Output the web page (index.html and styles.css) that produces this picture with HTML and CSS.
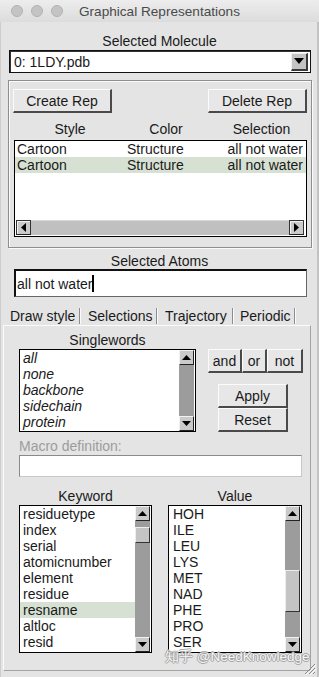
FILE: index.html
```html
<!DOCTYPE html>
<html>
<head>
<meta charset="utf-8">
<link rel="stylesheet" href="styles.css">
</head>
<body>
<div class="win">
  <div class="titlebar">
    <div class="lights"><span class="light"></span><span class="light"></span><span class="light"></span></div>
    <div class="title">Graphical Representations</div>
    <div></div>
  </div>

  <div class="lbl lbl-mol">Selected Molecule</div>
  <div class="menu">
    <span class="menu-text">0: 1LDY.pdb</span>
    <span class="menubtn"><svg width="10" height="6" viewBox="0 0 10 6"><path d="M0 0H10L5 6Z" fill="#000"/></svg></span>
  </div>

  <div class="frame">
    <div class="btnrow">
      <div class="btn rep-btn">Create Rep</div>
      <div class="btn rep-btn">Delete Rep</div>
    </div>
    <div class="hdr">
      <span class="h1">Style</span><span class="h2">Color</span><span class="h3">Selection</span>
    </div>
    <div class="replist">
      <div class="rows">
        <div class="rrow"><span class="c1">Cartoon</span><span class="c2">Structure</span><span class="c3">all not water</span></div>
        <div class="rrow sel"><span class="c1">Cartoon</span><span class="c2">Structure</span><span class="c3">all not water</span></div>
      </div>
      <div class="hscroll">
        <div class="arr"><svg width="5" height="9" viewBox="0 0 5 9"><path d="M5 0V9L0 4.5Z" fill="#000"/></svg></div>
        <div class="htrough"></div>
        <div class="arr"><svg width="5" height="9" viewBox="0 0 5 9"><path d="M0 0V9L5 4.5Z" fill="#000"/></svg></div>
      </div>
    </div>
  </div>

  <div class="lbl lbl-atoms">Selected Atoms</div>
  <div class="entry">all not water<span class="caret"></span></div>

  <div class="tabs">
    <div class="tab t1">Draw style</div>
    <div class="tab t2">Selections</div>
    <div class="tab t3">Trajectory</div>
    <div class="tab t4">Periodic</div>
  </div>

  <div class="pane">
    <div class="sec1">
      <div class="swcol">
        <div class="lbl">Singlewords</div>
        <div class="lb sw">
          <div class="items it">
            <div class="item">all</div>
            <div class="item">none</div>
            <div class="item">backbone</div>
            <div class="item">sidechain</div>
            <div class="item">protein</div>
          </div>
          <div class="vscroll">
            <div class="varr"><svg width="9" height="5" viewBox="0 0 9 5"><path d="M0 5H9L4.5 0Z" fill="#000"/></svg></div>
            <div class="vtrough"></div>
            <div class="varr"><svg width="9" height="5" viewBox="0 0 9 5"><path d="M0 0H9L4.5 5Z" fill="#000"/></svg></div>
          </div>
        </div>
      </div>
      <div class="opcol">
        <div class="ops">
          <div class="btn op op-and">and</div>
          <div class="btn op op-or">or</div>
          <div class="btn op op-not">not</div>
        </div>
        <div class="btn ar">Apply</div>
        <div class="btn ar">Reset</div>
      </div>
    </div>

    <div class="macro-lbl">Macro definition:</div>
    <div class="macro-entry"></div>

    <div class="sec2">
      <div class="kvcol kcol">
        <div class="lbl">Keyword</div>
        <div class="lb kv">
          <div class="items">
            <div class="item">residuetype</div>
            <div class="item">index</div>
            <div class="item">serial</div>
            <div class="item">atomicnumber</div>
            <div class="item">element</div>
            <div class="item">residue</div>
            <div class="item sel">resname</div>
            <div class="item">altloc</div>
            <div class="item">resid</div>
          </div>
          <div class="vscroll">
            <div class="varr"><svg width="9" height="5" viewBox="0 0 9 5"><path d="M0 5H9L4.5 0Z" fill="#000"/></svg></div>
            <div class="vtrough"><div class="thumb" style="margin-top:6px;height:16px"></div></div>
            <div class="varr"><svg width="9" height="5" viewBox="0 0 9 5"><path d="M0 0H9L4.5 5Z" fill="#000"/></svg></div>
          </div>
        </div>
      </div>
      <div class="kvcol vcol">
        <div class="lbl">Value</div>
        <div class="lb kv">
          <div class="items">
            <div class="item">HOH</div>
            <div class="item">ILE</div>
            <div class="item">LEU</div>
            <div class="item">LYS</div>
            <div class="item">MET</div>
            <div class="item">NAD</div>
            <div class="item">PHE</div>
            <div class="item">PRO</div>
            <div class="item">SER</div>
          </div>
          <div class="vscroll">
            <div class="varr"><svg width="9" height="5" viewBox="0 0 9 5"><path d="M0 5H9L4.5 0Z" fill="#000"/></svg></div>
            <div class="vtrough"><div class="thumb" style="margin-top:49px;height:42px"></div></div>
            <div class="varr"><svg width="9" height="5" viewBox="0 0 9 5"><path d="M0 0H9L4.5 5Z" fill="#000"/></svg></div>
          </div>
        </div>
      </div>
    </div>
  </div>

  <div class="watermark">知乎 @NeedKnowledge</div>
  <svg class="grip" width="12" height="12" viewBox="0 0 12 12">
    <path d="M11 1L1 11M11 5L5 11M11 9L9 11" stroke="#8a8a8a" stroke-width="1"/>
    <path d="M12 2L2 12M12 6L6 12" stroke="#fafafa" stroke-width="1"/>
  </svg>
</div>
</body>
</html>
```
FILE: styles.css
```css
* { box-sizing: border-box; margin: 0; padding: 0; }
html, body { width: 319px; height: 677px; overflow: hidden; }
body {
  background: #e4e4e4;
  font-family: "Liberation Sans", Arial, sans-serif;
  font-size: 14px;
  color: #1a1a1a;
}
.win {
  position: relative;
  width: 319px;
  height: 677px;
  display: flex;
  flex-direction: column;
  box-shadow: inset 1px 0 0 #cdcdcd, inset -2px 0 0 #c2c2c2;
}

/* title bar */
.titlebar {
  height: 22px;
  display: grid;
  grid-template-columns: 1fr auto 1fr;
  align-items: center;
  background: linear-gradient(#ededed, #dcdcdc);
}
.lights { display: flex; gap: 8px; padding-left: 11px; }
.light {
  width: 12px; height: 12px; border-radius: 50%;
  background: #c4c4c4;
  border: 1px solid #b2b2b2;
}
.title { font-size: 13.6px; color: #4a4a4a; }

.lbl { text-align: center; height: 16px; line-height: 16px; }
.lbl-mol { margin-top: 11px; }

/* menu */
.menu {
  margin: 1px 8px 0 9px;
  height: 23px;
  background: #fff;
  border: 1px solid #111;
  box-shadow: inset 1px 1px 0 #333;
  display: flex;
  align-items: center;
  justify-content: space-between;
}
.menu-text { padding-left: 4px; }
.menubtn {
  width: 17px; height: 18px;
  margin-right: 2px;
  background: #c3c3c3;
  border-style: solid;
  border-width: 1px 2px 2px 1px;
  border-color: #efefef #3a3a3a #3a3a3a #efefef;
  display: flex; align-items: center; justify-content: center;
}

/* frame */
.frame {
  margin: 7px 7px 0 8px;
  height: 168px;
  border: 1px solid #8e8e8e;
  box-shadow: inset 1px 1px 0 #fafafa, 1px 1px 0 #fafafa;
  padding: 8px 4px 10px 4px;
  display: flex;
  flex-direction: column;
}
.btnrow { display: flex; justify-content: space-between; }
.btn {
  height: 24px;
  background: #e7e7e7;
  border-style: solid;
  border-width: 1px 2px 2px 1px;
  border-color: #fbfbfb #4a4a4a #4a4a4a #fbfbfb;
  display: flex; align-items: center; justify-content: center;
  line-height: 16px;
}
.rep-btn { width: 99px; }
.hdr { margin: 8px 0 0 1px; height: 16px; line-height: 16px; display: flex; }
.h1 { width: 112px; text-align: center; }
.h2 { width: 80px; text-align: center; }
.h3 { flex: 1; text-align: center; padding-left: 10px; }

.replist {
  margin: 3px 0 0 1px;
  height: 97px;
  background: #fff;
  border: 1px solid #000;
  display: flex;
  flex-direction: column;
}
.rows { flex: 1; }
.rrow { display: flex; height: 16px; line-height: 16px; }
.rrow.sel { background: #d7e1d3; }
.c1 { width: 112px; padding-left: 2px; }
.c2 { flex: 1; }
.c3 { padding-right: 3px; text-align: right; }
.hscroll { display: flex; height: 15px; margin: 0 2px 1px 1px; }
.arr {
  width: 15px; height: 15px;
  background: #cacaca;
  border-style: solid; border-width: 1px;
  border-color: #333 #333 #222 #333;
  box-shadow: inset 1px 1px 0 #f2f2f2;
  display: flex; align-items: center; justify-content: center;
}
.htrough { flex: 1; background: #c0c0c0; border-top: 1px solid #d8d8d8; }

.lbl-atoms { margin-top: 5px; }
.entry {
  margin: 0 12px 0 14px;
  height: 28px;
  background: #fff;
  border-style: solid;
  border-width: 2px 1px 1px 2px;
  border-color: #111 #666 #666 #111;
  padding-left: 1px;
  display: flex; align-items: center;
}
.caret { width: 2px; height: 17px; background: #000; margin-left: 0; }

/* tabs */
.tabs { margin-top: 5px; height: 23px; display: flex; padding-left: 3px; }
.tab {
  position: relative;
  padding: 5px 0 0 7px;
  line-height: 18px;
}
.tab::after {
  content: "";
  position: absolute;
  right: 0; top: 6px;
  width: 1px; height: 16px;
  background: #8c8c8c;
  box-shadow: 1px 0 0 #fafafa;
}
.t1 { width: 77px; }
.t2 { width: 77px; padding-left: 8px; }
.t3 { width: 76px; padding-left: 8px; }
.t4 { width: 62px; }

/* pane */
.pane {
  flex: 1;
  margin: 0 8px 6px 3px;
  border-style: solid;
  border-width: 1px;
  border-color: #fbfbfb #a2a2a2 #a2a2a2 #fbfbfb;
  padding: 6px 0 0 15px;
  display: flex;
  flex-direction: column;
}
.sec1 { display: flex; align-items: flex-start; }
.swcol { width: 177px; }
.lb {
  margin-top: 1px;
  background: #fff;
  border: 1px solid #000;
  display: flex;
}
.sw { height: 83px; }
.items { flex: 1; }
.item { height: 16px; line-height: 16px; padding-left: 3px; }
.it .item { font-style: italic; }
.item.sel { background: #d7e1d3; }
.vscroll { width: 15px; display: flex; flex-direction: column; margin-right: 1px; }
.varr {
  height: 15px;
  background: #cacaca;
  border-style: solid; border-width: 1px;
  border-color: #f2f2f2 #222 #222 #f2f2f2;
  display: flex; align-items: center; justify-content: center;
}
.vtrough { flex: 1; background: #9c9c9c; }
.thumb {
  background: #c4c4c4;
  border-style: solid; border-width: 1px;
  border-color: #ededed #333 #333 #ededed;
}

.opcol { margin-left: 12px; padding-top: 17px; width: 95px; }
.ops { display: flex; }
.op-and { width: 34px; }
.op-or { width: 25px; }
.op-not { width: 36px; }
.ar { width: 70px; margin-left: 10px; }
.ops + .ar { margin-top: 11px; }

.macro-lbl { margin-top: 6px; height: 16px; line-height: 16px; color: #9c9c9c; }
.macro-entry {
  margin-top: 1px;
  width: 283px;
  height: 22px;
  background: #fff;
  border-style: solid;
  border-width: 1px;
  border-color: #8a8a8a #c8c8c8 #c8c8c8 #8a8a8a;
}

.sec2 { margin-top: 11px; display: flex; }
.kcol { width: 133px; }
.vcol { width: 134px; margin-left: 16px; }
.kv { height: 148px; }
.vcol .item { padding-left: 4px; }

.watermark {
  position: absolute;
  left: 165px;
  top: 648px;
  font-size: 13.5px;
  color: #fbfbfb;
  text-shadow: 1px 0 0 #999, -1px 0 0 #999, 0 1px 0 #999, 0 -1px 0 #999;
  opacity: 0.85;
  white-space: nowrap;
}
.grip { position: absolute; right: 3px; bottom: 2px; }
```
